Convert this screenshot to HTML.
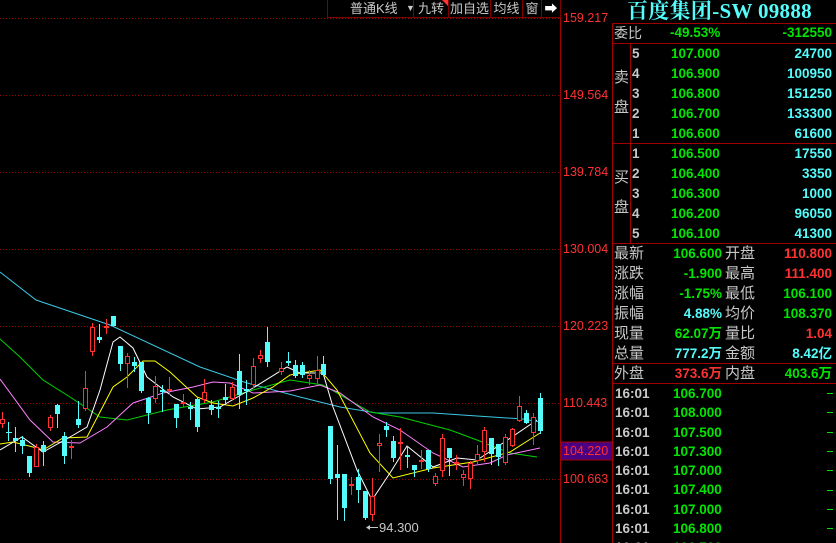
<!DOCTYPE html>
<html style="width:836px;height:543px;overflow:hidden"><head><meta charset="utf-8"><style>
*{margin:0;padding:0;box-sizing:border-box}
body{width:836px;height:543px;background:#000;overflow:hidden;position:relative;font-family:"Liberation Sans","Noto Sans CJK SC",sans-serif}
.a{position:absolute;white-space:nowrap}
.tb{position:absolute;top:0;height:18px;border:1px solid #800000;border-top:none;color:#c8c8c8;font-size:13px;line-height:17px;text-align:center}
.ax{position:absolute;left:563px;color:#ff3232;font-size:12.5px;line-height:14px}
.r{position:absolute;font-size:14px;line-height:20px;height:20px}
.w{color:#c8c8c8}.g{color:#00e600}.c{color:#54fcfc}.rd{color:#ff3232}
.num{font-weight:bold;font-size:13.5px}
.clip{position:absolute;left:0;top:0;width:836px;height:543px;overflow:hidden}
</style></head><body><div class="clip">
<svg width="836" height="543" style="position:absolute;left:0;top:0">
<g stroke="#a00000" stroke-dasharray="1,2" stroke-width="1">
<line x1="0" y1="18.5" x2="560" y2="18.5"/><line x1="0" y1="95.5" x2="560" y2="95.5"/><line x1="0" y1="172.5" x2="560" y2="172.5"/><line x1="0" y1="249.5" x2="560" y2="249.5"/><line x1="0" y1="326.5" x2="560" y2="326.5"/><line x1="0" y1="403.5" x2="560" y2="403.5"/><line x1="0" y1="479.5" x2="560" y2="479.5"/>
</g>
<line x1="560.5" y1="0" x2="560.5" y2="543" stroke="#a00000"/>
<line x1="612.5" y1="23" x2="612.5" y2="543" stroke="#a00000"/>
<rect x="561" y="442" width="52" height="18" fill="#4b0082" stroke="#a00000"/>
<g fill="none" stroke-width="1">
<polyline stroke="#3cc8e6" points="0,272 36,300 110,325 200,367 247,383 300,397 340,407 377,413 433,413 477,416 523,419 540,422"/>
<polyline stroke="#00d200" points="0,339 20,357 43,380 70,397 100,417 127,420 167,410 213,402 253,390 290,380 323,385 370,412 400,417 450,430 477,440 510,453 537,457"/>
<polyline stroke="#ff80ff" points="0,379 30,420 53,442 80,443 107,427 133,403 163,393 193,387 213,382 230,383 253,393 290,391 320,385 340,393 373,417 400,430 433,453 463,467 490,463 507,455 540,448"/>
<polyline stroke="#ffff00" points="0,444 13,442 33,447 43,450 63,438 87,437 113,387 127,377 143,361 155,361 170,372 197,397 213,403 233,406 253,398 273,387 290,375 320,370 337,390 370,453 393,478 433,468 473,462 510,452 540,433"/>
<polyline stroke="#ffffff" points="0,450 22,437 43,452 70,437 87,427 100,390 113,342 120,337 133,348 147,377 173,397 197,409 220,407 253,388 287,367 300,373 323,373 333,407 357,470 372,500 390,473 407,446 433,467 457,458 477,460 503,443 537,420"/>
</g>
<g stroke="#54fcfc" fill="#54fcfc">
<path fill="none" d="M8.5 422V441M15.5 427V452M22.5 436V454M29.5 456V477M43.5 441V466M57.5 404V428M64.5 432V464M78.5 401V428M99.5 324V343M113.5 316V326M120.5 346V371M134.5 357V372M141.5 362V393M148.5 397V424M162.5 385V412M176.5 404V428M190.5 402V420M197.5 397V432M211.5 400V415M218.5 401V418M225.5 384V404M239.5 354V409M246.5 380V405M267.5 327V367M288.5 352V366M295.5 360V378M302.5 362V378M323.5 356V376M330.5 426V484M337.5 445V520M344.5 474V521M358.5 469V503M365.5 491V520M386.5 422V437M393.5 436V462M407.5 446V468M414.5 465V477M428.5 450V472M449.5 448V476M491.5 438V465M498.5 444V466M526.5 410V424M540.5 393V434"/>
<g stroke="none">
<rect x="6" y="432" width="6" height="1"/><rect x="13" y="438" width="5" height="3"/><rect x="20" y="440" width="5" height="6"/><rect x="27" y="456" width="5" height="17"/><rect x="41" y="445" width="5" height="7"/><rect x="55" y="405" width="5" height="9"/><rect x="62" y="436" width="5" height="20"/><rect x="76" y="419" width="5" height="6"/><rect x="97" y="337" width="5" height="3"/><rect x="111" y="316" width="5" height="10"/><rect x="118" y="346" width="5" height="18"/><rect x="132" y="362" width="5" height="4"/><rect x="139" y="362" width="5" height="29"/><rect x="146" y="398" width="5" height="15"/><rect x="160" y="390" width="5" height="2"/><rect x="174" y="404" width="5" height="14"/><rect x="188" y="407" width="5" height="2"/><rect x="195" y="399" width="5" height="28"/><rect x="209" y="405" width="5" height="5"/><rect x="216" y="407" width="5" height="2"/><rect x="223" y="397" width="5" height="3"/><rect x="237" y="371" width="5" height="24"/><rect x="244" y="389" width="5" height="2"/><rect x="265" y="342" width="5" height="20"/><rect x="286" y="361" width="5" height="2"/><rect x="293" y="365" width="5" height="11"/><rect x="300" y="365" width="5" height="10"/><rect x="321" y="364" width="5" height="11"/><rect x="328" y="426" width="5" height="53"/><rect x="335" y="474" width="5" height="4"/><rect x="342" y="474" width="5" height="34"/><rect x="356" y="477" width="5" height="13"/><rect x="363" y="491" width="5" height="27"/><rect x="384" y="426" width="5" height="4"/><rect x="391" y="441" width="5" height="17"/><rect x="405" y="455" width="5" height="2"/><rect x="412" y="465" width="5" height="5"/><rect x="426" y="450" width="5" height="19"/><rect x="447" y="448" width="5" height="10"/><rect x="489" y="438" width="5" height="16"/><rect x="496" y="444" width="5" height="13"/><rect x="524" y="413" width="5" height="10"/><rect x="538" y="398" width="5" height="33"/>
</g></g>
<g stroke="#ff3232" fill="#000">
<path d="M2.5 412V428M36.5 444V466M50.5 415V431M71.5 440V459M85.5 371V411M92.5 323V356M106.5 319V334M127.5 353V388M155.5 376V403M169.5 377V395M183.5 394V407M204.5 379V403M232.5 382V400M253.5 358V388M260.5 350V363M281.5 362V375M309.5 370V385M317.5 356V384M351.5 477V495M372.5 478V521M379.5 434V472M400.5 428V470M421.5 450V469M435.5 473V486M442.5 434V477M456.5 455V470M463.5 470V486M470.5 461V489M477.5 445V464M484.5 427V462M505.5 434V465M512.5 428V447M519.5 396V422M533.5 413V445"/>
<rect x="0.5" y="419.5" width="4" height="4"/><rect x="34.5" y="447.5" width="4" height="19"/><rect x="48.5" y="417.5" width="4" height="10"/><rect x="69.5" y="446.5" width="4" height="1"/><rect x="83.5" y="388.5" width="4" height="20"/><rect x="90.5" y="327.5" width="4" height="24"/><rect x="104.5" y="326.5" width="4" height="1"/><rect x="125.5" y="356.5" width="4" height="7"/><rect x="153.5" y="386.5" width="4" height="12"/><rect x="167.5" y="389.5" width="4" height="1"/><rect x="181.5" y="402.5" width="4" height="1"/><rect x="202.5" y="392.5" width="4" height="7"/><rect x="230.5" y="387.5" width="4" height="11"/><rect x="251.5" y="366.5" width="4" height="18"/><rect x="258.5" y="355.5" width="4" height="3"/><rect x="279.5" y="368.5" width="4" height="3"/><rect x="307.5" y="375.5" width="4" height="3"/><rect x="315.5" y="370.5" width="4" height="8"/><rect x="349.5" y="484.5" width="4" height="1"/><rect x="370.5" y="496.5" width="4" height="18"/><rect x="377.5" y="443.5" width="4" height="2"/><rect x="398.5" y="442.5" width="4" height="1"/><rect x="419.5" y="460.5" width="4" height="1"/><rect x="433.5" y="476.5" width="4" height="7"/><rect x="440.5" y="438.5" width="4" height="32"/><rect x="454.5" y="462.5" width="4" height="1"/><rect x="461.5" y="474.5" width="4" height="3"/><rect x="468.5" y="463.5" width="4" height="15"/><rect x="475.5" y="454.5" width="4" height="6"/><rect x="482.5" y="430.5" width="4" height="21"/><rect x="503.5" y="437.5" width="4" height="25"/><rect x="510.5" y="429.5" width="4" height="16"/><rect x="517.5" y="406.5" width="4" height="14"/><rect x="531.5" y="417.5" width="4" height="15"/>
</g>
<path d="M368 527.5H378" stroke="#c8c8c8"/><path d="M366 527.5L370 525V530Z" fill="#c8c8c8"/>
<text x="379" y="532" fill="#c8c8c8" font-size="13" font-family="Liberation Sans">94.300</text>
<g stroke="#a00000" fill="none">
<rect x="612.5" y="23.5" width="230" height="600"/>
<line x1="613" y1="43.5" x2="836" y2="43.5"/><line x1="613" y1="143.5" x2="836" y2="143.5"/><line x1="613" y1="243.5" x2="836" y2="243.5"/><line x1="613" y1="363.5" x2="836" y2="363.5"/><line x1="613" y1="383.5" x2="836" y2="383.5"/>
<line x1="630.5" y1="43" x2="630.5" y2="243"/>
</g>
<g stroke="#00e600"><path d="M827 393.5H833M827 412.5H833M827 432.5H833M827 451.5H833M827 470.5H833M827 490.5H833M827 509.5H833M827 528.5H833"/></g>
</svg>
<div class="tb" style="left:327px;width:87px;text-align:left;padding-left:22px">普通K线<span style="position:absolute;left:78px;top:0;font-size:9px">▼</span></div>
<div class="tb" style="left:413px;width:36px">九转<span style="position:absolute;right:0;top:0;width:0;height:0;border-top:6px solid #ff3232;border-left:6px solid transparent"></span></div>
<div class="tb" style="left:448px;width:43px">加自选</div>
<div class="tb" style="left:490px;width:33px">均线</div>
<div class="tb" style="left:522px;width:20px">窗</div>
<div class="tb" style="left:541px;width:20px;color:#fff;font-weight:bold">➡</div>
<div class="ax" style="top:11px">159.217</div><div class="ax" style="top:88px">149.564</div><div class="ax" style="top:165px">139.784</div><div class="ax" style="top:242px">130.004</div><div class="ax" style="top:319px">120.223</div><div class="ax" style="top:396px">110.443</div><div class="ax" style="top:444px">104.220</div><div class="ax" style="top:472px">100.663</div>
<div class="a" style="left:627px;top:0;color:#54fcfc;font-family:'Liberation Serif','Noto Serif CJK SC',serif;font-weight:bold;font-size:21px;line-height:22px;letter-spacing:0.3px">百度集团-SW 09888</div>
<div class="r w" style="left:614px;top:23px">委比</div><div class="r g num" style="left:670px;top:23px">-49.53%</div><div class="r g num" style="right:4px;top:23px">-312550</div>
<div class="r w" style="left:614px;top:63px;line-height:30px;height:70px;width:16px;white-space:normal;font-size:15px">卖<br>盘</div>
<div class="r w" style="left:614px;top:163px;line-height:30px;height:70px;width:16px;white-space:normal;font-size:15px">买<br>盘</div>
<div class="a" style="left:632px;top:44px;font-size:13.5px;font-weight:bold;line-height:20px;color:#c8c8c8">5<br>4<br>3<br>2<br>1<br>1<br>2<br>3<br>4<br>5</div>
<div class="a g" style="left:671px;top:44px;font-size:13.5px;font-weight:bold;line-height:20px">107.000<br>106.900<br>106.800<br>106.700<br>106.600<br>106.500<br>106.400<br>106.300<br>106.200<br>106.100</div>
<div class="a c" style="right:4px;top:44px;font-size:13.5px;font-weight:bold;line-height:20px;text-align:right">24700<br>100950<br>151250<br>133300<br>61600<br>17550<br>3350<br>1000<br>96050<br>41300</div>
<div class="a w" style="left:614px;top:244px;font-size:15px;line-height:20px">最新<br>涨跌<br>涨幅<br>振幅<br>现量<br>总量<br>外盘</div>
<div class="a w" style="left:725px;top:244px;font-size:15px;line-height:20px">开盘<br>最高<br>最低<br>均价<br>量比<br>金额<br>内盘</div>
<div class="a num" style="right:114px;top:244px;line-height:20px;text-align:right"><span class="g">106.600</span><br><span class="g">-1.900</span><br><span class="g">-1.75%</span><br><span class="c">4.88%</span><br><span class="g">62.07万</span><br><span class="c">777.2万</span><br><span class="rd">373.6万</span></div>
<div class="a num" style="right:4px;top:244px;line-height:20px;text-align:right"><span class="rd">110.800</span><br><span class="rd">111.400</span><br><span class="g">106.100</span><br><span class="g">108.370</span><br><span class="rd">1.04</span><br><span class="c">8.42亿</span><br><span class="g">403.6万</span></div>
<div class="a w num" style="left:615px;top:384px;line-height:19.3px">16:01<br>16:01<br>16:01<br>16:01<br>16:01<br>16:01<br>16:01<br>16:01<br>16:01</div>
<div class="a g num" style="left:673px;top:384px;line-height:19.3px">106.700<br>108.000<br>107.500<br>107.300<br>107.000<br>107.400<br>107.000<br>106.800<br>106.700</div>
</div></body></html>
